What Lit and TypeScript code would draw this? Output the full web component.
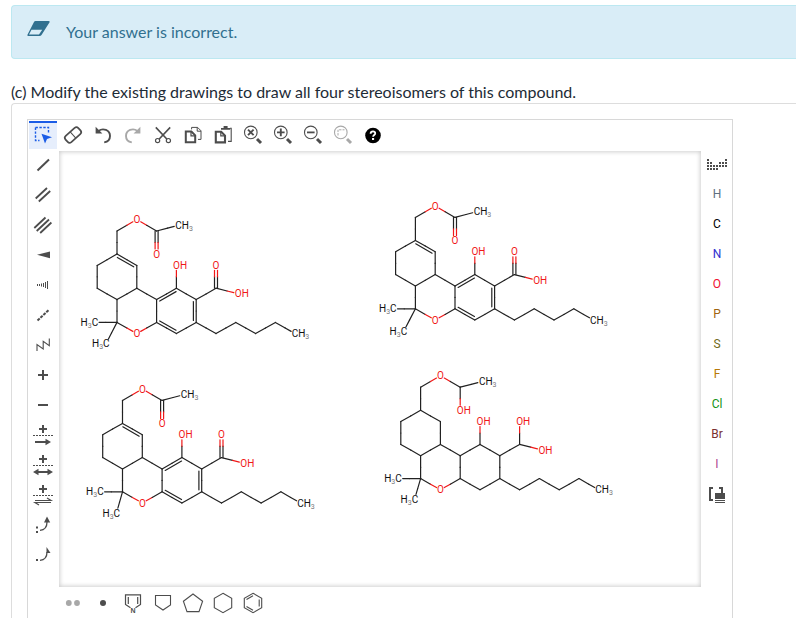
import { LitElement, html, svg, css } from "lit";
import { customElement, property, state } from "lit/decorators.js";

type Pt = [number, number];
interface Atom { x: number; y: number; text?: string; flip?: boolean; }
interface Tool { name: string; icon?: unknown; text?: string; muted?: boolean; }

/* ---------- tool icons, each on a 28 by 28 grid ---------- */

const lens = svg`<circle cx="11.8" cy="11.4" r="6.3" fill="none" stroke="currentColor" stroke-width="1.1"/>
  <path d="M18 18l4 4" stroke="currentColor" stroke-width="3"/>`;

const reactionTop = svg`<path d="M10 8h8M14 4v8" stroke="currentColor" stroke-width="2"/>
  <path d="M4 14.5h20" stroke="currentColor" stroke-dasharray="2 1"/>`;

const topTools: Tool[] = [
  { name: "Select", icon: svg`<path d="M6.5 6.5h13v5M6.5 6.5v13h4" fill="none" stroke="currentColor" stroke-width="1.4" stroke-dasharray="2.4 1.5"/>
    <path d="M12.5 12.8L23 16.2L18 18L16 22.4Z" fill="currentColor"/>` },
  { name: "Erase", icon: svg`<g transform="rotate(-42 14 14)" fill="none" stroke="currentColor" stroke-width="1.7"><rect x="5.4" y="9.8" width="17.2" height="8.4" rx="2.6"/><path d="M14 9.8v8.4" stroke-width="1"/></g>` },
  { name: "Undo", icon: svg`<path d="M9.5 10C14 6.6 21 9 21 15C21 18.4 18.8 20.8 15.2 21.4" fill="none" stroke="currentColor" stroke-width="1.9"/><path d="M6.6 5.8V12.6H13.4Z" fill="currentColor"/>` },
  { name: "Redo", muted: true, icon: svg`<path d="M18.5 10C14 6.6 7 9 7 15C7 18.4 9.2 20.8 12.8 21.4" fill="none" stroke="currentColor" stroke-width="1.9"/><path d="M21.4 5.8V12.6H14.6Z" fill="currentColor"/>` },
  { name: "Cut", icon: svg`<path d="M6.8 6.4L17.8 18M21.2 6.4L10.2 18" stroke="currentColor" stroke-width="1.6"/><g fill="none" stroke="currentColor" stroke-width="1.2"><circle cx="8.6" cy="19.6" r="2.1"/><circle cx="19.4" cy="19.6" r="2.1"/></g>` },
  { name: "Copy", icon: svg`<path d="M6.8 10.6h5.6l3.8 3.8v6.8H6.8Z" fill="none" stroke="currentColor" stroke-width="2"/><path d="M12 10.5v4.4h4.2" fill="none" stroke="currentColor" stroke-width="1.2"/><path d="M12.6 8.4V6.4h6l3.4 3.4v8.6h-3M18.2 6.4v3.8H22" fill="none" stroke="currentColor"/>` },
  { name: "Paste", icon: svg`<path d="M6.8 10.8h5.4l3.8 3.8v6.8H6.8Z" fill="none" stroke="currentColor" stroke-width="2.1"/><path d="M11.8 10.5v4.4h4.2" fill="none" stroke="currentColor" stroke-width="1.2"/><path d="M12 8.8V7h2.6V5h4v2h2.6v1.8Z" fill="currentColor"/><path d="M21 7.2h1.2v13.2H19" fill="none" stroke="currentColor" stroke-width="1.1"/>` },
  { name: "Zoom to fit", icon: svg`${lens}<path d="M9 8.6l5.6 5.6M14.6 8.6L9 14.2" stroke="currentColor" stroke-width="1.9"/>` },
  { name: "Zoom in", icon: svg`${lens}<path d="M8 11.4h7.6M11.8 7.6v7.6" stroke="currentColor" stroke-width="1.9"/>` },
  { name: "Zoom out", icon: svg`${lens}<path d="M8 11.4h7.6" stroke="currentColor" stroke-width="1.8"/>` },
  { name: "Zoom to selection", muted: true, icon: svg`${lens}<path d="M9 14.5V8.8h6.5" fill="none" stroke="currentColor" stroke-dasharray="2.4 1"/>` },
  { name: "Help", icon: svg`<circle cx="14" cy="14.5" r="7.8" fill="#000"/><path d="M11.6 12.8c.1-3.4 5-3 4.6-.2c-.2 1.4-2.1 1.5-2.1 3.2" fill="none" stroke="#fff" stroke-width="1.8"/><rect x="13" y="17" width="2.1" height="2" fill="#fff"/>` },
];

const leftTools: Tool[] = [
  { name: "Single bond", icon: svg`<path d="M8.5 19.5L20 8.5" stroke="currentColor" stroke-width="2"/>` },
  { name: "Double bond", icon: svg`<path d="M6.7 17.5L18 7M9.8 20.5L21.2 10" stroke="currentColor" stroke-width="1.8"/>` },
  { name: "Triple bond", icon: svg`<path d="M5.3 17L16.5 6.5M7.7 20L20 8.5M11.2 22L22.4 11.5" stroke="currentColor" stroke-width="1.8"/>` },
  { name: "Wedge bond", icon: svg`<path d="M8 13.8L21 10.4V17.2Z" fill="currentColor"/>` },
  { name: "Hashed bond", icon: svg`<path d="M8.5 13v2M10.5 13v2M12.5 12.5v3M14.5 12v4M16.5 11v6M18.5 10v8" stroke="currentColor"/>` },
  { name: "Coordinate bond", icon: svg`<path d="M8.5 19.5L20 8.8" stroke="currentColor" stroke-width="2" stroke-dasharray="3 1"/>` },
  { name: "Wavy bond", icon: svg`<path d="M8 20V13.5L14.2 18V10.2L20.3 14.6V7.5" fill="none" stroke="currentColor" stroke-width="1.1"/>` },
  { name: "Increase charge", icon: svg`<path d="M9 14h10M14 9v10" stroke="currentColor" stroke-width="2"/>` },
  { name: "Decrease charge", icon: svg`<path d="M9 14h10" stroke="currentColor" stroke-width="2"/>` },
  { name: "Reaction arrow", icon: svg`${reactionTop}<path d="M6 21h12" stroke="currentColor" stroke-width="2"/><path d="M16.5 17.8L22 21L16.5 24.2Z" fill="currentColor"/>` },
  { name: "Resonance arrow", icon: svg`${reactionTop}<path d="M8 21h12" stroke="currentColor" stroke-width="2"/><path d="M18.5 17.8L24 21L18.5 24.2ZM9.5 17.8L4 21L9.5 24.2Z" fill="currentColor"/>` },
  { name: "Equilibrium arrow", icon: svg`${reactionTop}<path d="M6 19.5h16L18 17M22 21.5H6l4 2.5" fill="none" stroke="currentColor" stroke-width="1.2"/>` },
  { name: "Electron pair arrow", icon: svg`<path d="M7 15.5h2v2h-2zM7 20h2v2h-2z" fill="currentColor"/><path d="M11 19.3C15.5 19 18 16 18 11" fill="none" stroke="currentColor" stroke-width="1.3"/><path d="M18 5.5L21.2 11.5H15Z" fill="currentColor"/>` },
  { name: "Single electron arrow", icon: svg`<path d="M7 18h2v2h-2z" fill="currentColor"/><path d="M11 19.3C15.5 19 18 16 18 11" fill="none" stroke="currentColor" stroke-width="1.3"/><path d="M17.5 6L21.5 12H17.5Z" fill="currentColor"/>` },
];

const hexagon = svg`<path d="M14 4.3L22.7 9.2V18.8L14 23.7L5.3 18.8V9.2Z" fill="none" stroke="currentColor" stroke-width="1.1"/>`;

const bottomTools: Tool[] = [
  { name: "Lone pair", muted: true, icon: svg`<circle cx="9.8" cy="14" r="2.9" fill="currentColor"/><circle cx="18" cy="14" r="2.9" fill="currentColor"/>` },
  { name: "Radical", icon: svg`<circle cx="14" cy="14" r="3" fill="currentColor"/>` },
  { name: "Pyrrole", icon: svg`<path d="M11.5 18.8L6.5 15.5V5.9H21.5V15.5L16.5 18.8M9.3 8v7M18.7 8v7" fill="none" stroke="currentColor" stroke-width="1.2"/><text x="14" y="24" class="ring-n">N</text>` },
  { name: "Cyclopentane", icon: svg`<path d="M6.5 6.5H21.5V16L14 21L6.5 16Z" fill="none" stroke="currentColor" stroke-width="1.1"/>` },
  { name: "Pentagon ring", icon: svg`<path d="M14 5L23.6 12.2L20 22.6H8L4.4 12.2Z" fill="none" stroke="currentColor" stroke-width="1.1"/>` },
  { name: "Cyclohexane", icon: hexagon },
  { name: "Benzene", icon: svg`${hexagon}<path d="M7.5 10.5L14 6.8M20.2 10.5v7M7.5 17.5L14 21.2" stroke="currentColor" stroke-width="1.1"/>` },
];

const periodicCells: Pt[] = [4, 3, 2, 2, 2, 2, 3].flatMap((count, column) =>
  Array.from({ length: count }, (_, row): Pt => [4 + column * 3, (column > 3 ? 14 : 17) - row * 3]));

const elementTools: Tool[] = [
  { name: "Periodic table", icon: svg`${periodicCells.map(([x, y]) => svg`<rect x=${x} y=${y} width="2" height="2" fill="currentColor"/>`)}` },
  { name: "Hydrogen", text: "H" },
  { name: "Carbon", text: "C" },
  { name: "Nitrogen", text: "N" },
  { name: "Oxygen", text: "O" },
  { name: "Phosphorus", text: "P" },
  { name: "Sulfur", text: "S" },
  { name: "Fluorine", text: "F" },
  { name: "Chlorine", text: "Cl" },
  { name: "Bromine", text: "Br" },
  { name: "Iodine", text: "I" },
  { name: "Abbreviated groups", icon: svg`<path d="M10 7H7v12h3M16 7h3v6" fill="none" stroke="currentColor" stroke-width="2"/><path d="M12 12h10v6H12zM12 19h10v1H12zM12 21h10v1H12z" fill="currentColor"/>` },
];

/* ---------- molecules ---------- */

const INK = "#222222";
const OXYGEN = "#f01818";

function atomsOf(saturated: boolean, methyl: Pt): Record<string, Atom> {
  const hydroxylOr = saturated ? "OH" : "O";
  return {
    a: { x: 0, y: 0 }, b: { x: 19.8, y: 11.4 }, c: { x: 19.8, y: 34.2 }, d: { x: 0, y: 45.6 },
    e: { x: -19.8, y: 34.2 }, f: { x: -19.8, y: 11.4 }, g: { x: 0, y: 68.4 },
    o: { x: 19.8, y: 79.6, text: "O" }, h: { x: 39.6, y: 68.4 }, i: { x: 39.6, y: 45.6 },
    j: { x: 59.4, y: 34.2 }, k: { x: 79.2, y: 45.6 }, l: { x: 79.2, y: 68.4 }, m: { x: 59.4, y: 79.6 },
    n: { x: 0, y: -23 }, p: { x: 19.8, y: -34.4, text: "O" }, q: { x: 39.6, y: -23 },
    r: { x: 39.6, y: 0, text: hydroxylOr }, s: { x: 61.6, y: -28.8, text: "CH3" },
    t: { x: 59.4, y: 11.4, text: "OH" }, u: { x: 99, y: 34.2 }, v: { x: 99, y: 11.4, text: hydroxylOr },
    w: { x: 121.2, y: 39.8, text: "OH" },
    x1: { x: 99, y: 79.6 }, x2: { x: 118.8, y: 68.4 }, x3: { x: 138.6, y: 79.6 }, x4: { x: 158.4, y: 68.4 },
    x5: { x: 178, y: 79.6, text: "CH3" },
    y1: { x: -22.4, y: 68.4, text: "CH3", flip: true },
    y2: { x: methyl[0], y: methyl[1], text: "CH3", flip: true },
  };
}

const singleBonds = "b-c c-d d-e e-f f-a d-g g-o o-h h-i i-c j-k l-m a-n n-p p-q q-s j-t k-u u-w l-x1 x1-x2 x2-x3 x3-x4 x4-x5 g-y1 g-y2".split(" ");
const ringDoubles: [string, Pt][] = [["a-b", [0, 22.8]], ["i-j", [59.4, 57]], ["k-l", [59.4, 57]], ["m-h", [59.4, 57]]];
const carbonyls = ["q-r", "u-v"];

function segment(x1: number, y1: number, x2: number, y2: number, color: string) {
  return svg`<line x1=${x1} y1=${y1} x2=${x2} y2=${y2} stroke=${color}/>`;
}

/* A bond stops short of a labelled atom, and the half next to oxygen is red. */
function bond(from: Atom, to: Atom, shift = 0) {
  const dx = to.x - from.x, dy = to.y - from.y, len = Math.hypot(dx, dy);
  const ux = dx / len, uy = dy / len;
  const at = (t: number): Pt => [from.x + ux * t - uy * shift, from.y + uy * t + ux * shift];
  const room = (atom: Atom) => atom.text ? (Math.abs(uy) > 0.8 ? 5 : 4.5) : 0;
  const shade = (atom: Atom) => atom.text?.startsWith("O") ? OXYGEN : INK;
  const p = at(room(from)), mid = at(len / 2), q = at(len - room(to));
  return svg`${segment(...p, ...mid, shade(from))}${segment(...mid, ...q, shade(to))}`;
}

function innerBond(from: Atom, to: Atom, center: Pt) {
  const dx = to.x - from.x, dy = to.y - from.y, len = Math.hypot(dx, dy);
  const ux = dx / len, uy = dy / len;
  const side = ux * (center[1] - from.y) - uy * (center[0] - from.x) > 0 ? 2.8 : -2.8;
  const at = (t: number): Pt => [from.x + ux * t - uy * side, from.y + uy * t + ux * side];
  return segment(...at(2), ...at(len - 2), INK);
}

function label(atom: Atom) {
  const y = atom.y + 3.6;
  if (atom.text === "CH3" && atom.flip) {
    return svg`<text class="atom" x=${atom.x + 3.6} y=${y} text-anchor="end">H<tspan class="sub" dy="2">3</tspan><tspan dy="-2">C</tspan></text>`;
  }
  if (atom.text === "CH3") {
    return svg`<text class="atom" x=${atom.x - 3.3} y=${y}>CH<tspan class="sub" dy="2">3</tspan></text>`;
  }
  return svg`<text class="atom oxygen" x=${atom.x - 3.4} y=${y}>${atom.text}</text>`;
}

function molecule(x: number, y: number, methyl: Pt, saturated = false) {
  const atoms = atomsOf(saturated, methyl);
  const ends = (key: string) => key.split("-").map((id) => atoms[id]) as [Atom, Atom];
  return svg`<g transform="translate(${x} ${y})">
    ${singleBonds.map((key) => bond(...ends(key)))}
    ${ringDoubles.map(([key, center]) => svg`${bond(...ends(key))}${saturated ? "" : innerBond(...ends(key), center)}`)}
    ${carbonyls.map((key) => saturated ? bond(...ends(key)) : svg`${bond(...ends(key), 1.5)}${bond(...ends(key), -1.5)}`)}
    ${Object.values(atoms).filter((atom) => atom.text).map(label)}
  </g>`;
}

@customElement("tool-strip")
class ToolStrip extends LitElement {
  @property({ attribute: false }) tools: Tool[] = [];
  @property({ type: Boolean, reflect: true }) vertical = false;
  @state() private active = "Select";

  static styles = css`
    :host { display: flex; gap: 2px; }
    :host([vertical]) { flex-direction: column; }
    button {
      width: 28px; height: 28px; padding: 0 0 2px; border: 0; background: none; flex: none;
      color: #4d4d4d; cursor: pointer; text-align: center;
      font: 12px/26px Roboto, "Liberation Sans", sans-serif;
    }
    button.icon { padding: 0; }
    button.muted { color: #a8a8a8; }
    button.active { color: #1a5ce6; background: #e6eefc; box-shadow: inset 0 2px #1a5ce6; }
    svg { display: block; width: 28px; height: 28px; }
    .ring-n { font: bold 7px "Liberation Sans", sans-serif; text-anchor: middle; fill: currentColor; }
    .h { color: #5f6f80; } .c { color: #000; } .n { color: #3030d0; } .o { color: #f01030; }
    .p { color: #a06410; } .s { color: #716a18; } .f { color: #b87908; } .cl { color: #169316; }
    .br { color: #7a3030; } .i { color: #b03f90; }
  `;

  render() {
    return this.tools.map((tool) => html`<button type="button"
      class="${tool.text ? tool.text.toLowerCase() : "icon"} ${tool.muted ? "muted" : ""} ${tool.name === this.active ? "active" : ""}"
      aria-label=${tool.name} @click=${() => { this.active = tool.name; }}>${tool.text ?? html`<svg viewBox="0 0 28 28" aria-hidden="true">${tool.icon}</svg>`}</button>`);
  }
}

@customElement("structure-canvas")
class StructureCanvas extends LitElement {
  static styles = css`
    :host { display: block; min-height: 436px; background: #fff; box-shadow: inset 0 0 4px 1px #cfcfcf; }
    svg { display: block; width: 100%; height: 436px; stroke-width: 1.2; stroke-linecap: round; }
    .atom { font: 10px Roboto, "Liberation Sans", sans-serif; fill: #111; stroke: none; }
    .oxygen { fill: #f01818; }
    .sub { font-size: 7px; fill: #777; }
  `;

  render() {
    return html`<svg role="img" aria-label="Four skeletal structures">
      ${molecule(58, 103, [-11, 89.6])}
      ${molecule(356.4, 89.4, [-11.8, 91])}
      ${molecule(63.5, 272.4, [-6, 89.6])}
      ${molecule(361.6, 259.2, [-6, 89], true)}
    </svg>`;
  }
}

@customElement("app-root")
class AppRoot extends LitElement {
  static styles = css`
    :host { display: block; padding: 5px 0 0 11px; background: #fff; font: 16px/22px Lato, sans-serif; color: #1d2b36; }
    .alert {
      display: flex; align-items: center; gap: 16px; padding: 15px; margin: 0 0 22px;
      border: 1px solid #bce8f1; border-right: 0; border-radius: 4px 0 0 4px;
      background: #d9edf7; color: #31708f;
    }
    .alert p, .prompt { margin: 0; }
    .alert svg { width: 23px; height: 22px; flex: none; }
    .prompt { font-size: 16px; font-weight: 400; }
    .panel { border: 1px solid #ddd; border-width: 1px 0 0 1px; border-radius: 4px 0 0 0; padding: 15px 63px 0 15px; }
    .editor {
      display: grid; grid-template-columns: 28px 1fr 28px; gap: 2px;
      border: 1px solid #d8d8d8; border-bottom: 0; padding: 1px;
    }
    .top { grid-column: 1 / -1; }
    .bottom { grid-column: 2 / -1; }
  `;

  render() {
    return html`
      <div class="alert" role="status">
        <svg viewBox="0 0 23 22" aria-hidden="true"><path d="M8.5 0H21.5Q23.300 0 22.400 1.600L14.500 14Q13.800 15 12.500 15H1.500Q-.3 15 .6 13.400L7 1Q7.500 0 8.500 0ZM4.500 8.800L2 13.500H12L15.200 8.800Z" fill="currentColor" fill-rule="evenodd"/></svg>
        <p>Your answer is incorrect.</p>
      </div>
      <h2 class="prompt">(c) Modify the existing drawings to draw all four stereoisomers of this compound.</h2>
      <main class="panel">
        <div class="editor">
          <tool-strip class="top" role="toolbar" aria-label="Edit" .tools=${topTools}></tool-strip>
          <tool-strip vertical role="toolbar" aria-label="Bonds" .tools=${leftTools}></tool-strip>
          <structure-canvas></structure-canvas>
          <tool-strip vertical role="toolbar" aria-label="Elements" .tools=${elementTools}></tool-strip>
          <tool-strip class="bottom" role="toolbar" aria-label="Rings" .tools=${bottomTools}></tool-strip>
        </div>
      </main>`;
  }
}
